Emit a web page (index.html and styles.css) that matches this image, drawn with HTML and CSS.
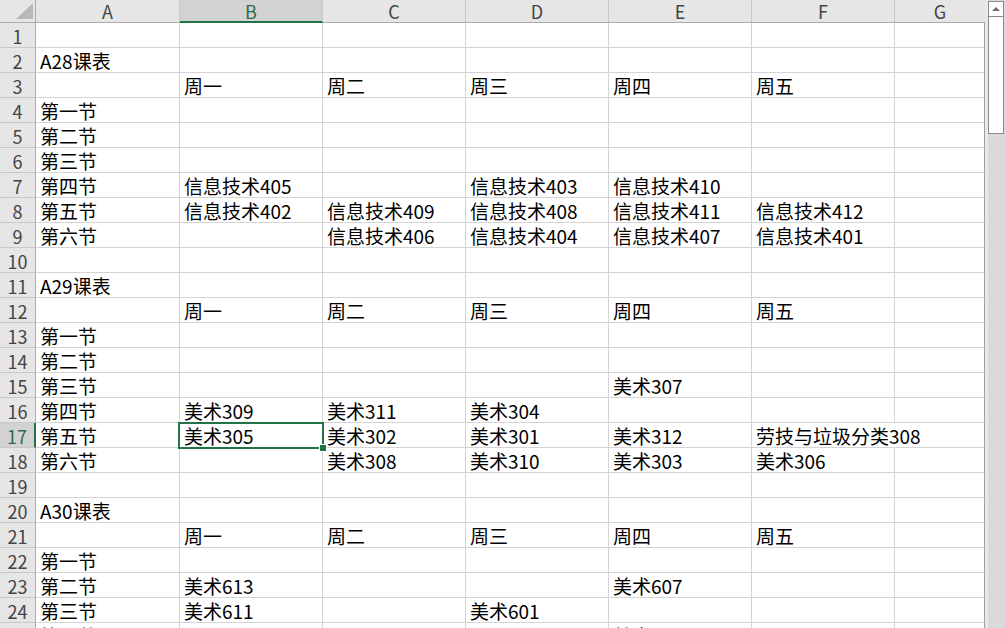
FILE: index.html
```html
<!DOCTYPE html>
<html lang="zh-CN">
<head>
<meta charset="utf-8">
<title>课表</title>
<link rel="stylesheet" href="styles.css">
</head>
<body>
<div class="app">
  <div class="sheet">
    <div class="row head">
      <div class="corner"><svg width="36" height="22" viewBox="0 0 36 22"><polygon points="33,3 33,19 16,19" fill="#b8b8b8"/></svg></div>
      <div class="ch">A</div><div class="ch on">B</div><div class="ch">C</div><div class="ch">D</div><div class="ch">E</div><div class="ch">F</div><div class="ch last">G</div>
    </div>
    <div class="row"><div class="rh">1</div><div class="c"></div><div class="c"></div><div class="c"></div><div class="c"></div><div class="c"></div><div class="c"></div><div class="c last"></div></div>
    <div class="row"><div class="rh">2</div><div class="c">A28课表</div><div class="c"></div><div class="c"></div><div class="c"></div><div class="c"></div><div class="c"></div><div class="c last"></div></div>
    <div class="row"><div class="rh">3</div><div class="c"></div><div class="c">周一</div><div class="c">周二</div><div class="c">周三</div><div class="c">周四</div><div class="c">周五</div><div class="c last"></div></div>
    <div class="row"><div class="rh">4</div><div class="c">第一节</div><div class="c"></div><div class="c"></div><div class="c"></div><div class="c"></div><div class="c"></div><div class="c last"></div></div>
    <div class="row"><div class="rh">5</div><div class="c">第二节</div><div class="c"></div><div class="c"></div><div class="c"></div><div class="c"></div><div class="c"></div><div class="c last"></div></div>
    <div class="row"><div class="rh">6</div><div class="c">第三节</div><div class="c"></div><div class="c"></div><div class="c"></div><div class="c"></div><div class="c"></div><div class="c last"></div></div>
    <div class="row"><div class="rh">7</div><div class="c">第四节</div><div class="c">信息技术405</div><div class="c"></div><div class="c">信息技术403</div><div class="c">信息技术410</div><div class="c"></div><div class="c last"></div></div>
    <div class="row"><div class="rh">8</div><div class="c">第五节</div><div class="c">信息技术402</div><div class="c">信息技术409</div><div class="c">信息技术408</div><div class="c">信息技术411</div><div class="c">信息技术412</div><div class="c last"></div></div>
    <div class="row"><div class="rh">9</div><div class="c">第六节</div><div class="c"></div><div class="c">信息技术406</div><div class="c">信息技术404</div><div class="c">信息技术407</div><div class="c">信息技术401</div><div class="c last"></div></div>
    <div class="row"><div class="rh">10</div><div class="c"></div><div class="c"></div><div class="c"></div><div class="c"></div><div class="c"></div><div class="c"></div><div class="c last"></div></div>
    <div class="row"><div class="rh">11</div><div class="c">A29课表</div><div class="c"></div><div class="c"></div><div class="c"></div><div class="c"></div><div class="c"></div><div class="c last"></div></div>
    <div class="row"><div class="rh">12</div><div class="c"></div><div class="c">周一</div><div class="c">周二</div><div class="c">周三</div><div class="c">周四</div><div class="c">周五</div><div class="c last"></div></div>
    <div class="row"><div class="rh">13</div><div class="c">第一节</div><div class="c"></div><div class="c"></div><div class="c"></div><div class="c"></div><div class="c"></div><div class="c last"></div></div>
    <div class="row"><div class="rh">14</div><div class="c">第二节</div><div class="c"></div><div class="c"></div><div class="c"></div><div class="c"></div><div class="c"></div><div class="c last"></div></div>
    <div class="row"><div class="rh">15</div><div class="c">第三节</div><div class="c"></div><div class="c"></div><div class="c"></div><div class="c">美术307</div><div class="c"></div><div class="c last"></div></div>
    <div class="row"><div class="rh">16</div><div class="c">第四节</div><div class="c">美术309</div><div class="c">美术311</div><div class="c">美术304</div><div class="c"></div><div class="c"></div><div class="c last"></div></div>
    <div class="row"><div class="rh on">17</div><div class="c">第五节</div><div class="c sel">美术305</div><div class="c">美术302</div><div class="c">美术301</div><div class="c">美术312</div><div class="c spill">劳技与垃圾分类308</div><div class="c last"></div></div>
    <div class="row"><div class="rh">18</div><div class="c">第六节</div><div class="c"></div><div class="c">美术308</div><div class="c">美术310</div><div class="c">美术303</div><div class="c">美术306</div><div class="c last"></div></div>
    <div class="row"><div class="rh">19</div><div class="c"></div><div class="c"></div><div class="c"></div><div class="c"></div><div class="c"></div><div class="c"></div><div class="c last"></div></div>
    <div class="row"><div class="rh">20</div><div class="c">A30课表</div><div class="c"></div><div class="c"></div><div class="c"></div><div class="c"></div><div class="c"></div><div class="c last"></div></div>
    <div class="row"><div class="rh">21</div><div class="c"></div><div class="c">周一</div><div class="c">周二</div><div class="c">周三</div><div class="c">周四</div><div class="c">周五</div><div class="c last"></div></div>
    <div class="row"><div class="rh">22</div><div class="c">第一节</div><div class="c"></div><div class="c"></div><div class="c"></div><div class="c"></div><div class="c"></div><div class="c last"></div></div>
    <div class="row"><div class="rh">23</div><div class="c">第二节</div><div class="c">美术613</div><div class="c"></div><div class="c"></div><div class="c">美术607</div><div class="c"></div><div class="c last"></div></div>
    <div class="row"><div class="rh">24</div><div class="c">第三节</div><div class="c">美术611</div><div class="c"></div><div class="c">美术601</div><div class="c"></div><div class="c"></div><div class="c last"></div></div>
    <div class="row"><div class="rh">25</div><div class="c">第四节</div><div class="c"></div><div class="c"></div><div class="c"></div><div class="c">美术605</div><div class="c"></div><div class="c last"></div></div>
  </div>
  <div class="vscroll">
    <div class="sb-box">
      <div class="sb-up"><span class="arrow"></span></div>
      <div class="sb-thumb"></div>
    </div>
  </div>
</div>
</body>
</html>
```
FILE: styles.css
```css
html, body {
  margin: 0;
  padding: 0;
  background: #ffffff;
  overflow: hidden;
}
.app {
  display: flex;
  width: 1006px;
  height: 628px;
  overflow: hidden;
  font-family: "Noto Sans CJK SC", "Noto Sans", sans-serif;
}
.sheet {
  width: 985px;
  flex: none;
  overflow: hidden;
  background: #ffffff;
}
.row {
  display: grid;
  grid-template-columns: 36px 144px repeat(5, 143px) 90px;
  height: 25px;
}
.row.head {
  height: 23px;
}
.corner {
  background: #e6e6e6;
  border-right: 1px solid #ababab;
  border-bottom: 1px solid #ababab;
  box-sizing: border-box;
  height: 23px;
}
.corner svg {
  display: block;
}
.ch {
  box-sizing: border-box;
  height: 23px;
  background: #e6e6e6;
  border-right: 1px solid #c6c6c6;
  border-bottom: 1px solid #ababab;
  color: #444444;
  font-size: 18px;
  display: flex;
  align-items: center;
  justify-content: center;
  line-height: 1;
}
.ch.on {
  background: #d2d2d2;
  border-bottom: 2px solid #217346;
  color: #2e6b47;
}
.ch.last {
  border-right: none;
}
.rh {
  box-sizing: border-box;
  height: 25px;
  background: #e6e6e6;
  border-right: 1px solid #ababab;
  border-bottom: 1px solid #c8c8c8;
  color: #444444;
  font-size: 18px;
  padding-top: 2px;
  line-height: 22px;
  text-align: center;
}
.rh.on {
  background: #d2d2d2;
  color: #2e6b47;
  border-right: 2px solid #217346;
}
.c {
  box-sizing: border-box;
  height: 25px;
  border-right: 1px solid #d4d4d4;
  border-bottom: 1px solid #d4d4d4;
  padding-left: 4px;
  padding-top: 2px;
  font-size: 19px;
  line-height: 22px;
  color: #000000;
  white-space: nowrap;
}
.c.last {
  border-right: 1px solid #a0a0a0;
}
.c.spill {
  border-right-color: transparent;
  overflow: visible;
  position: relative;
  z-index: 1;
}
.c.sel {
  position: relative;
  z-index: 2;
}
.c.sel::after {
  content: "";
  position: absolute;
  left: -2px;
  top: -1px;
  right: -2px;
  bottom: -2px;
  border: 2px solid #217346;
}
.c.sel::before {
  content: "";
  position: absolute;
  right: -4px;
  bottom: -4px;
  width: 6px;
  height: 6px;
  background: #217346;
  box-shadow: 0 0 0 1px #ffffff;
  z-index: 3;
}
.vscroll {
  flex: 1;
  background: linear-gradient(to right, #e9e9e9 0, #e9e9e9 3px, #dadada 3px);
  padding: 1px 3px 0 3px;
  box-sizing: border-box;
}
.sb-box {
  width: 16px;
  height: 133px;
  box-sizing: border-box;
  border: 1px solid #8a8a8a;
  background: #ffffff;
  display: flex;
  flex-direction: column;
}
.sb-up {
  height: 14px;
  border-bottom: 1px solid #8a8a8a;
  display: flex;
  align-items: center;
  justify-content: center;
}
.arrow {
  width: 0;
  height: 0;
  border-left: 4px solid transparent;
  border-right: 4px solid transparent;
  border-bottom: 4px solid #707070;
}
.sb-thumb {
  flex: 1;
}
```
